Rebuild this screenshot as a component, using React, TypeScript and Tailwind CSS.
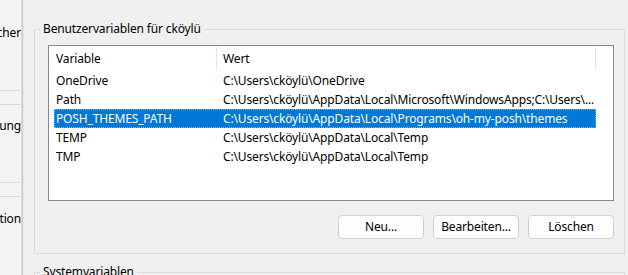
import React from 'react';

const rows = [
  { name: 'OneDrive', value: 'C:\\Users\\cköylü\\OneDrive' },
  { name: 'Path', value: 'C:\\Users\\cköylü\\AppData\\Local\\Microsoft\\WindowsApps;C:\\Users\\...' },
  { name: 'POSH_THEMES_PATH', value: 'C:\\Users\\cköylü\\AppData\\Local\\Programs\\oh-my-posh\\themes', selected: true },
  { name: 'TEMP', value: 'C:\\Users\\cköylü\\AppData\\Local\\Temp' },
  { name: 'TMP', value: 'C:\\Users\\cköylü\\AppData\\Local\\Temp' },
];

function SideItem({ label, height }: { label: string; height: string }) {
  return (
    <div className={`flex justify-end overflow-hidden whitespace-nowrap ${height}`}>
      <span>{label}</span>
    </div>
  );
}

function WinButton({ children }: { children: React.ReactNode }) {
  return (
    <button className="w-[86px] h-[24px] rounded-[4px] border border-[#d0d0d0] bg-[#fdfdfd] text-black">
      {children}
    </button>
  );
}

export default function App() {
  return (
    <div
      className="flex w-[628px] h-[275px] overflow-hidden bg-[#f0f0f0] text-[12px] leading-[16px] tracking-[-0.15px] text-black"
      style={{ fontFamily: '"Noto Sans", "Segoe UI", sans-serif' }}
    >
      {/* Seitenleiste des Hauptfensters */}
      <div className="flex flex-col w-[21px] shrink-0 bg-[#f3f3f3]">
        <SideItem label="cher" height="h-[90px] pt-[25px]" />
        <div className="h-[15px] shrink-0 border-y border-[#d9d9d9]" />
        <SideItem label="ung" height="h-[77px] pt-[13px]" />
        <div className="h-[15px] shrink-0 border-y border-[#d9d9d9]" />
        <SideItem label="ation" height="h-[78px] pt-[14px]" />
      </div>
      <div className="w-[3px] shrink-0 bg-gradient-to-r from-[#c4c4c4] to-[#f0f0f0] border-l border-[#dadada]" />

      <div className="flex-1 flex flex-col pl-[10px] pr-[3px] pt-[21px]">
        <fieldset className="border border-[#dcdcdc] pl-[13px] pb-[14px] pr-[10px]">
          <legend className="-ml-[8px] px-[3px]">Benutzervariablen für cköylü</legend>
          <div className="mt-[8px] h-[156px] border border-[#828790] bg-white flex flex-col">
            <div className="flex h-[25px] shrink-0 pl-[5px]">
              <div className="w-[163px] flex items-center pl-[2px] border-r border-[#e5e5e5] my-[1px]">Variable</div>
              <div className="w-[379px] flex items-center pl-[6px] border-r border-[#e5e5e5] my-[1px]">Wert</div>
            </div>
            {rows.map((r) => (
              <div
                key={r.name}
                className={`ml-[5px] w-[542px] h-[19px] pt-[1px] flex items-center whitespace-nowrap ${
                  r.selected ? 'bg-[#0078d7] text-white outline outline-1 outline-dotted outline-[#e8a050] -outline-offset-1' : ''
                }`}
              >
                <div className="w-[163px] pl-[2px] overflow-hidden">{r.name}</div>
                <div className="w-[379px] pl-[6px] overflow-hidden">{r.value}</div>
              </div>
            ))}
          </div>
          <div className="flex justify-end gap-[9px] mt-[14px]">
            <WinButton>Neu...</WinButton>
            <WinButton>Bearbeiten...</WinButton>
            <WinButton>Löschen</WinButton>
          </div>
        </fieldset>
        <fieldset className="mt-[10px] border border-[#dcdcdc] pl-[13px] h-[40px] shrink-0">
          <legend className="-ml-[8px] px-[3px]">Systemvariablen</legend>
        </fieldset>
      </div>
    </div>
  );
}
